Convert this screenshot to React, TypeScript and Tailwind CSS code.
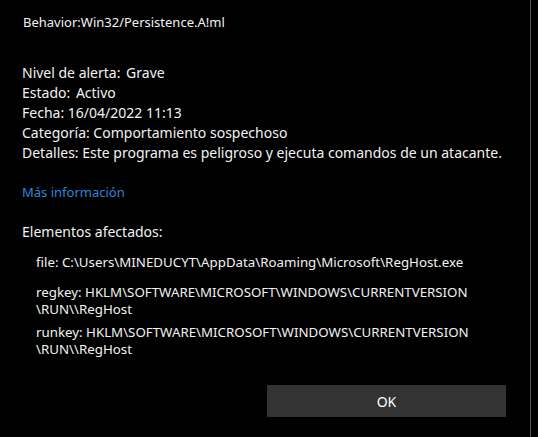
export default function App() {
  return (
    <div className="w-[538px] h-[437px] bg-black flex text-[#f2f2f2] [font-family:'Noto_Sans','Open_Sans',sans-serif]">
      {/* Panel */}
      <div className="w-[531px] h-full border-r border-[#5a5a5a] flex flex-col">
        <div className="pl-[23px] pt-[13px] text-[13px] leading-[18px]">
          Behavior:Win32/Persistence.A!ml
        </div>

        {/* Details */}
        <div className="pl-[22px] mt-[32px] text-[14px] leading-[20px]">
          <p>
            Nivel de alerta: <span className="ml-[2px]">Grave</span>
          </p>
          <p>
            Estado: <span className="ml-[2px]">Activo</span>
          </p>
          <p>Fecha: 16/04/2022 11:13</p>
          <p>Categoría: Comportamiento sospechoso</p>
          <p>Detalles: Este programa es peligroso y ejecuta comandos de un atacante.</p>
        </div>

        <a className="pl-[22px] mt-[19px] text-[13px] leading-[20px] text-[#2c86dc]">
          Más información
        </a>

        <div className="pl-[22px] mt-[20px] text-[14px] leading-[20px]">Elementos afectados:</div>

        {/* Affected items */}
        <div className="pl-[36px] mt-[12px] text-[13.3px] leading-[17px] flex flex-col">
          <p>file: C:\Users\MINEDUCYT\AppData\Roaming\Microsoft\RegHost.exe</p>
          <p className="mt-[13px]">
            regkey: HKLM\SOFTWARE\MICROSOFT\WINDOWS\CURRENTVERSION
            <br />
            \RUN\\RegHost
          </p>
          <p className="mt-[6px]">
            runkey: HKLM\SOFTWARE\MICROSOFT\WINDOWS\CURRENTVERSION
            <br />
            \RUN\\RegHost
          </p>
        </div>

        <div className="flex justify-end pr-[24px] mt-auto mb-[20px]">
          <button className="w-[239px] h-[32px] bg-[#333333] text-[14px] text-white">OK</button>
        </div>
      </div>
    </div>
  );
}
